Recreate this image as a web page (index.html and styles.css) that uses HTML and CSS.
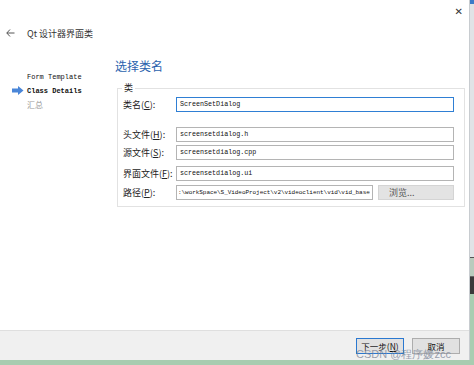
FILE: index.html
```html
<!DOCTYPE html>
<html>
<head>
<meta charset="utf-8">
<link rel="stylesheet" href="styles.css">
</head>
<body>
<div class="screen">
  <div class="top">
    <div class="dialog">
      <div class="titlebar"><span class="close">✕</span></div>
      <div class="header">
        <svg class="back" width="9" height="8" viewBox="0 0 9 8"><path d="M4 0.5 L0.8 4 L4 7.5 M0.8 4 H8.5" fill="none" stroke="#555" stroke-width="1"/></svg>
        <span class="htitle">Qt 设计器界面类</span>
      </div>
      <div class="body">
        <div class="nav">
          <div class="nitem">Form Template</div>
          <div class="nitem cur"><svg class="arrow" width="12" height="9" viewBox="0 0 12 9"><path d="M0 2.5 H6 V0 L11.5 4.5 L6 9 V6.5 H0 Z" fill="#4a86d8"/></svg>Class Details</div>
          <div class="nitem cn">汇总</div>
        </div>
        <div class="content">
          <div class="title">选择类名</div>
          <div class="group">
            <div class="glabel">类</div>
            <div class="row r1"><span class="lab">类名(<u>C</u>):</span><div class="inp focus">ScreenSetDialog</div></div>
            <div class="row r2"><span class="lab">头文件(<u>H</u>):</span><div class="inp">screensetdialog.h</div></div>
            <div class="row r3"><span class="lab">源文件(<u>S</u>):</span><div class="inp">screensetdialog.cpp</div></div>
            <div class="row r4"><span class="lab">界面文件(<u>F</u>):</span><div class="inp">screensetdialog.ui</div></div>
            <div class="row r5"><span class="lab">路径(<u>P</u>):</span><div class="inp path">:\workSpace\S_VideoProject\v2\videoclient\vid\vid_base</div><div class="browse">浏览...</div></div>
          </div>
        </div>
      </div>
      <div class="footer">
        <div class="btn primary">下一步(<u>N</u>)</div>
        <div class="btn">取消</div>
        <div class="wm">CSDN @程序媛zcc</div>
      </div>
    </div>
    <div class="strip">
      <div class="s1"></div><div class="s2"></div><div class="s3"></div><div class="s4"></div><div class="s5"></div>
    </div>
  </div>
  <div class="bottom"></div>
</div>
</body>
</html>
```
FILE: styles.css
```css
* { box-sizing: border-box; }
html, body { margin: 0; padding: 0; }
body { width: 474px; height: 365px; overflow: hidden; background: #fff; font-family: "Noto Sans CJK SC", "Noto Sans", sans-serif; color: #222; }
.screen { display: flex; flex-direction: column; width: 474px; height: 365px; }
.top { display: flex; flex: 1; min-height: 0; }
.dialog { width: 469px; display: flex; flex-direction: column; background: #fff; position: relative; }
.strip { width: 5px; display: flex; flex-direction: column; background: #d6dadf; border-left: 1px solid #c8ccd0; }
.strip .s1 { height: 4px; background: #3d7bc7; }
.strip .s2 { height: 254px; background: #e0e3e6; border-bottom: 1px solid #555; }
.strip .s3 { height: 19px; background: #b9cbbd; border-bottom: 1px solid #666; }
.strip .s4 { height: 17px; background: #3a3a3a; }
.strip .s5 { flex: 1; background: #a9cdb1; }
.bottom { height: 5px; background: #a8ccb0; }

.titlebar { height: 22px; display: flex; justify-content: flex-end; align-items: center; padding-right: 6px; }
.close { font-family: "DejaVu Sans", sans-serif; font-size: 10px; color: #333; }
.header { height: 22px; display: flex; align-items: center; padding-left: 6px; }
.back { margin-right: 12px; }
.htitle { font-size: 9px; color: #333; }

.body { flex: 1; display: flex; min-height: 0; }
.nav { width: 115px; padding-top: 26px; }
.nitem { height: 14px; line-height: 14px; padding-left: 27px; font-family: "Liberation Mono", monospace; font-size: 7px; color: #111; position: relative; }
.nitem.cur { font-weight: bold; }
.nitem.cn { font-family: "Noto Sans CJK SC", sans-serif; font-size: 8px; color: #999; }
.arrow { position: absolute; left: 12px; top: 2px; }

.content { flex: 1; padding-top: 15px; }
.title { font-size: 12px; line-height: 14px; color: #2a62ad; padding-left: 0; height: 14px; }
.group { margin: 15px 0 0 2px; width: 348px; border: 1px solid #e2e2e2; padding: 0 10px 6px 5px; position: relative; }
.glabel { position: absolute; top: -7px; left: 4px; background: #fff; font-size: 9px; line-height: 12px; padding: 0 2px; color: #222; }
.row { display: flex; align-items: center; height: 15px; }
.r1 { margin-top: 8px; }
.r2 { margin-top: 15px; }
.r3 { margin-top: 3px; }
.r4 { margin-top: 6px; }
.r5 { margin-top: 4px; }
.lab { width: 53px; font-size: 9px; color: #222; white-space: nowrap; }
.lab u { text-decoration: underline; }
.inp { flex: 1; height: 15px; border: 1px solid #b4b4b4; font-family: "Liberation Mono", monospace; font-size: 6.7px; line-height: 13px; padding-left: 3px; color: #111; white-space: nowrap; overflow: hidden; }
.inp.focus { border-color: #2f7fd4; }
.inp.path { flex: 0 0 197px; padding-left: 1px; font-size: 6px; letter-spacing: -0.05px; }
.browse { margin-left: 5px; flex: 1; height: 15px; background: #e3e3e3; border: 1px solid #d4d4d4; font-size: 9px; line-height: 13px; padding-left: 10px; color: #555; }

.footer { height: 30px; background: #f0f0f0; border-top: 1px solid #dfdfdf; display: flex; align-items: center; justify-content: flex-end; padding-right: 9px; gap: 8px; position: relative; }
.btn { width: 48px; height: 16px; border: 1px solid #adadad; background: #e1e1e1; font-size: 8.5px; line-height: 14px; text-align: center; color: #111; }
.btn.primary { border-color: #2a78d0; }
.wm { position: absolute; left: 356px; top: 16px; font-family: "Liberation Sans", sans-serif; font-size: 11px; color: rgba(120,130,150,0.75); white-space: nowrap; }
```
